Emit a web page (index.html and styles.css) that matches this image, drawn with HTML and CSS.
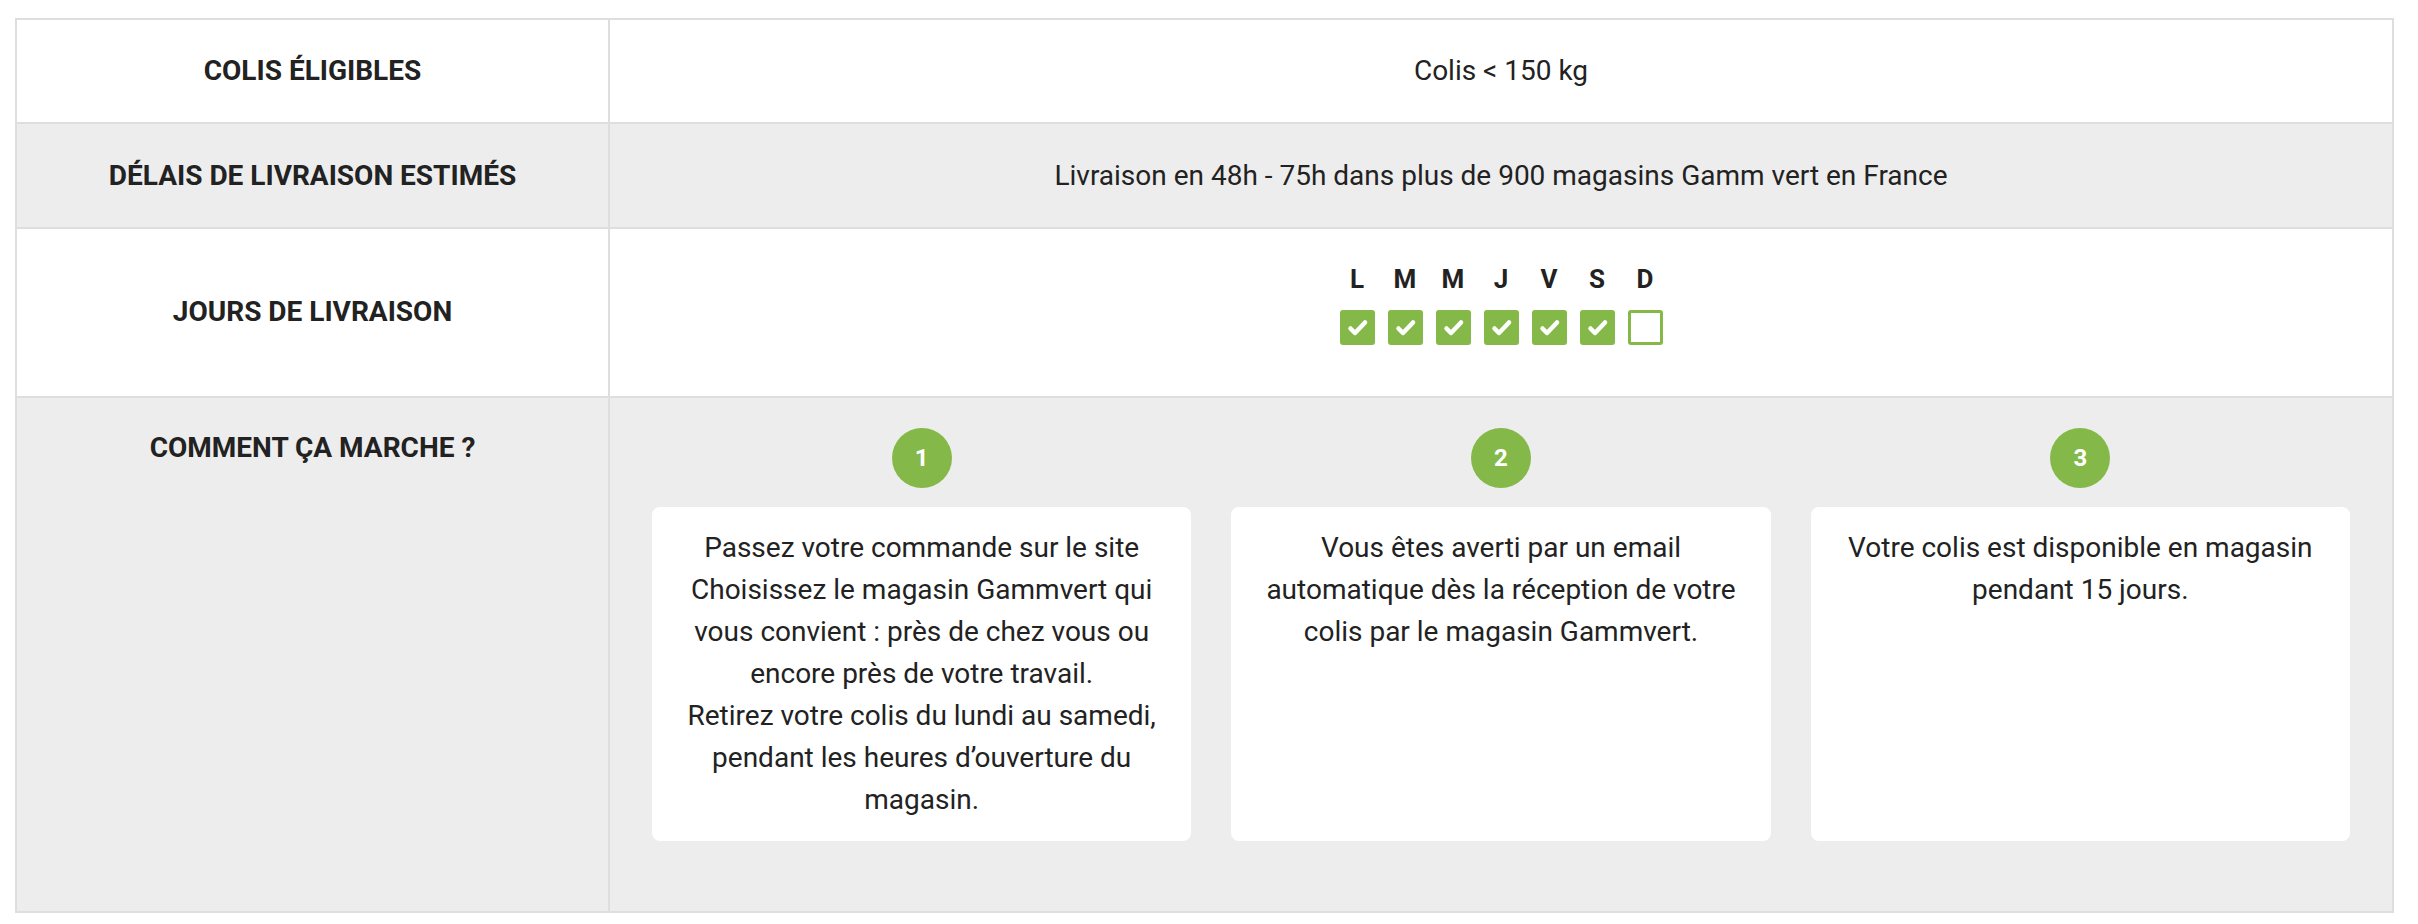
FILE: index.html
```html
<!DOCTYPE html>
<html lang="fr">
<head>
<meta charset="utf-8">
<title>Retrait en magasin</title>
<link rel="stylesheet" href="styles.css">
</head>
<body>
<table class="info">
  <tr class="r1">
    <th>Colis éligibles</th>
    <td>Colis &lt; 150 kg</td>
  </tr>
  <tr class="r2 grey">
    <th>Délais de livraison estimés</th>
    <td>Livraison en 48h - 75h dans plus de 900 magasins Gamm vert en France</td>
  </tr>
  <tr class="r3">
    <th class="mid">Jours de livraison</th>
    <td class="days-cell">
      <div class="days">
        <span class="day">L</span><span class="day">M</span><span class="day">M</span><span class="day">J</span><span class="day">V</span><span class="day">S</span><span class="day">D</span>
        <span class="box on"><svg viewBox="0 0 35 35"><polyline points="10.5,18.5 15,23 25,12.5"/></svg></span>
        <span class="box on"><svg viewBox="0 0 35 35"><polyline points="10.5,18.5 15,23 25,12.5"/></svg></span>
        <span class="box on"><svg viewBox="0 0 35 35"><polyline points="10.5,18.5 15,23 25,12.5"/></svg></span>
        <span class="box on"><svg viewBox="0 0 35 35"><polyline points="10.5,18.5 15,23 25,12.5"/></svg></span>
        <span class="box on"><svg viewBox="0 0 35 35"><polyline points="10.5,18.5 15,23 25,12.5"/></svg></span>
        <span class="box on"><svg viewBox="0 0 35 35"><polyline points="10.5,18.5 15,23 25,12.5"/></svg></span>
        <span class="box off"></span>
      </div>
    </td>
  </tr>
  <tr class="r4 grey">
    <th class="top">Comment ça marche ?</th>
    <td class="steps-cell">
      <div class="steps">
        <div class="step">
          <div class="num">1</div>
          <div class="card">Passez votre commande sur le site<br>Choisissez le magasin Gammvert qui vous convient : près de chez vous ou encore près de votre travail.<br>Retirez votre colis du lundi au samedi, pendant les heures d’ouverture du magasin.</div>
        </div>
        <div class="step">
          <div class="num">2</div>
          <div class="card">Vous êtes averti par un email automatique dès la réception de votre colis par le magasin Gammvert.</div>
        </div>
        <div class="step">
          <div class="num">3</div>
          <div class="card">Votre colis est disponible en magasin pendant 15 jours.</div>
        </div>
      </div>
    </td>
  </tr>
</table>
</body>
</html>
```

FILE: styles.css
```css
html, body {
  background: #ffffff;
}

body {
  margin: 0;
  padding: 18px 24px 0 15px;
  font-family: Roboto, "Noto Sans", "Liberation Sans", sans-serif;
  color: #222222;
}

.info {
  width: 2379px;
  border-collapse: collapse;
  background: #ffffff;
}

.info th,
.info td {
  border: 2px solid #dedede;
  text-align: center;
  vertical-align: middle;
  padding: 0;
}

.info th {
  width: 591px;
  font-size: 28px;
  font-weight: 700;
  text-transform: uppercase;
  line-height: 42px;
}

.info td {
  font-size: 28px;
  line-height: 42px;
}

.grey {
  background: #ededed;
}

.r1 { height: 104px; }
.r2 { height: 105px; }
.r3 { height: 169px; }
.r4 { height: 515px; }

.info th.mid {
  padding-bottom: 2px;
}

.info th.top {
  vertical-align: top;
  padding-top: 29px;
}

.info td.days-cell {
  vertical-align: top;
  padding-top: 29px;
}

.days {
  display: inline-grid;
  grid-template-columns: repeat(7, 35px);
  column-gap: 13px;
  row-gap: 14px;
}

.day {
  font-size: 26px;
  font-weight: 700;
  line-height: 34px;
  text-align: center;
}

.box {
  width: 35px;
  height: 35px;
  border-radius: 3px;
  box-sizing: border-box;
  display: block;
}

.box.on {
  background: #84b949;
}

.box.off {
  background: #ffffff;
  border: 3px solid #84b949;
}

.box svg {
  display: block;
  width: 35px;
  height: 35px;
}

.box polyline {
  fill: none;
  stroke: #ffffff;
  stroke-width: 4.5;
  stroke-linecap: round;
  stroke-linejoin: round;
}

.info td.steps-cell {
  vertical-align: top;
  padding: 30px 42px 69px;
}

.steps {
  display: grid;
  grid-template-columns: repeat(3, 1fr);
  column-gap: 40px;
}

.step {
  display: flex;
  flex-direction: column;
  align-items: center;
}

.num {
  width: 60px;
  height: 60px;
  border-radius: 50%;
  background: #84b949;
  color: #ffffff;
  display: flex;
  align-items: center;
  justify-content: center;
  font-size: 24px;
  font-weight: 700;
  line-height: 1;
  margin-bottom: 19px;
}

.card {
  align-self: stretch;
  flex: 1;
  background: #ffffff;
  border-radius: 8px;
  padding: 20px 28px;
  font-size: 28px;
  line-height: 42px;
  text-align: center;
}
```
